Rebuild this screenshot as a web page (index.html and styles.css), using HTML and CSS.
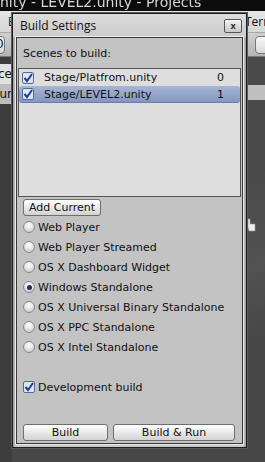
FILE: index.html
```html
<!DOCTYPE html>
<html lang="en">
<head>
    <meta charset="UTF-8">
    <title>Build Settings</title>
    <link rel="stylesheet" href="styles.css">
</head>
<body>
    <div class="app">
        <div class="app-titulo">nity - LEVEL2.unity - Projects</div>
        <div class="menubar">
            <span>E</span>
            <span>Terrain</span>
        </div>
        <div class="toolbar">
            <span class="tool-btn esquerda">0</span>
            <span class="tool-btn direita"></span>
        </div>
        <div class="area">
            <div class="painel-esq">
                <div class="linha clara">ce</div>
                <div class="linha">ur</div>
            </div>
            <div class="cena">
                <div class="faixa"></div>
                <svg class="mao" width="9" height="14" viewBox="0 0 9 14">
                    <path d="M1 1 L3 1 L3 6 L8 6 L8 13 L2 13 L1 9 Z" fill="#eee" stroke="#999" stroke-width="0.6"/>
                </svg>
            </div>
        </div>
    </div>

    <div class="janela">
        <div class="titulo">
            <span>Build Settings</span>
            <span class="fechar">x</span>
        </div>
        <div class="painel">
            <div class="rotulo">Scenes to build:</div>
            <div class="lista">
                <div class="cena-item">
                    <span class="check">
                        <svg width="12" height="12" viewBox="0 0 12 12"><rect x="0.5" y="0.5" width="11" height="11" rx="1.5" fill="#dfe5f0" stroke="#566c98"/><path d="M2.5 6 L5 9 L10 2" fill="none" stroke="#1d3f8e" stroke-width="2"/></svg>
                    </span>
                    <span class="nome">Stage/Platfrom.unity</span>
                    <span class="indice">0</span>
                </div>
                <div class="cena-item ativo">
                    <span class="check">
                        <svg width="12" height="12" viewBox="0 0 12 12"><rect x="0.5" y="0.5" width="11" height="11" rx="1.5" fill="#dfe5f0" stroke="#566c98"/><path d="M2.5 6 L5 9 L10 2" fill="none" stroke="#1d3f8e" stroke-width="2"/></svg>
                    </span>
                    <span class="nome">Stage/LEVEL2.unity</span>
                    <span class="indice">1</span>
                </div>
            </div>
            <button class="botao adicionar">Add Current</button>
            <div class="plataformas">
                <div class="opcao"><span class="radio"></span>Web Player</div>
                <div class="opcao"><span class="radio"></span>Web Player Streamed</div>
                <div class="opcao"><span class="radio"></span>OS X Dashboard Widget</div>
                <div class="opcao"><span class="radio marcado"></span>Windows Standalone</div>
                <div class="opcao"><span class="radio"></span>OS X Universal Binary Standalone</div>
                <div class="opcao"><span class="radio"></span>OS X PPC Standalone</div>
                <div class="opcao"><span class="radio"></span>OS X Intel Standalone</div>
            </div>
            <div class="opcao dev">
                <span class="check">
                    <svg width="12" height="12" viewBox="0 0 12 12"><rect x="0.5" y="0.5" width="11" height="11" rx="1.5" fill="#dfe5f0" stroke="#566c98"/><path d="M2.5 6 L5 9 L10 2" fill="none" stroke="#1d3f8e" stroke-width="2"/></svg>
                </span>
                Development build
            </div>
            <div class="acoes">
                <button class="botao build">Build</button>
                <button class="botao run">Build &amp; Run</button>
            </div>
        </div>
    </div>
</body>
</html>
```

FILE: styles.css
```css
* {
    box-sizing: border-box;
    margin: 0;
    padding: 0;
}

body {
    width: 265px;
    height: 462px;
    overflow: hidden;
    position: relative;
    background-color: #454545;
    font-family: 'DejaVu Sans', sans-serif;
    color: #111;
}

/* janela principal atras */
.app {
    display: flex;
    flex-direction: column;
    height: 100%;
}

.app-titulo {
    height: 11px;
    background-color: #0c0c0c;
    color: #d8d8d8;
    font-size: 14px;
    line-height: 4px;
    overflow: hidden;
    white-space: nowrap;
    filter: blur(0.4px);
}

.menubar {
    height: 22px;
    background: linear-gradient(#e6e6e6, #d6d6d6);
    border-bottom: 1px solid #a8a8a8;
    display: flex;
    justify-content: space-between;
    align-items: center;
    font-size: 12px;
    padding: 0 0 0 8px;
    font-family: 'Open Sans', sans-serif;
}

.menubar span:first-child {
    width: 4px;
    overflow: hidden;
}

.menubar span:last-child {
    width: 20px;
    overflow: hidden;
    white-space: nowrap;
}

.toolbar {
    height: 24px;
    background: linear-gradient(#cfcfcf, #b4b4b4);
    display: flex;
    justify-content: space-between;
    align-items: center;
    border-bottom: 1px solid #777;
}

.tool-btn {
    height: 18px;
    background: linear-gradient(#fafafa, #d8d8d8);
    border: 1px solid #777;
    border-radius: 4px;
    font-size: 12px;
}

.tool-btn.esquerda {
    width: 10px;
    margin-left: -5px;
    text-align: right;
    padding-right: 1px;
}

.tool-btn.direita {
    width: 20px;
    margin-right: -10px;
}

.area {
    flex: 1;
    display: flex;
}

.painel-esq {
    width: 12px;
    overflow: hidden;
    background-color: #3d3d3d;
}

.painel-esq .linha {
    height: 20px;
    font-size: 12px;
    line-height: 20px;
    background-color: #bdbdbd;
    white-space: nowrap;
    direction: rtl;
}

.painel-esq .linha.clara {
    margin-top: 7px;
    background-color: #e2e2e2;
}

.cena {
    flex: 1;
    background: linear-gradient(160deg, #4a4a4a 40%, #525252 60%, #474747 75%);
    position: relative;
}

.faixa {
    height: 15px;
    margin-top: 28px;
    background-color: #c0c0c0;
}

.mao {
    position: absolute;
    right: 9px;
    top: 161px;
}

/* janela Build Settings */
.janela {
    position: absolute;
    left: 12px;
    top: 13px;
    width: 235px;
    height: 435px;
    border: 1px solid #1e1e1e;
    background: linear-gradient(90deg, #9c9c9c, #c9c9c9 3px, #c9c9c9 calc(100% - 3px), #9c9c9c);
    padding: 0 3px 3px 3px;
    display: flex;
    flex-direction: column;
    box-shadow: 0 0 0 1px #5a5a5a;
}

.titulo {
    height: 23px;
    display: flex;
    justify-content: space-between;
    align-items: center;
    background: linear-gradient(#dcdcdc, #cbcbcb);
    margin: 0 -3px;
    padding-left: 7px;
    padding-right: 4px;
    font-family: 'Open Sans', sans-serif;
    font-size: 12px;
}

.fechar {
    width: 18px;
    height: 14px;
    border: 1px solid #555;
    border-radius: 2px;
    background: linear-gradient(#f4f4f4, #c8c8c8);
    font-size: 9px;
    font-weight: bold;
    line-height: 11px;
    text-align: center;
    color: #333;
    margin-top: 1px;
}

.painel {
    flex: 1;
    background-color: #c3c3c3;
    border: 1px solid #3a3a3a;
    box-shadow: 0 0 0 1px #eaeaea;
    display: flex;
    flex-direction: column;
    padding: 0 1px 1px 1px;
    font-size: 11px;
}

.rotulo {
    padding: 9px 0 0 5px;
    height: 30px;
}

.lista {
    height: 129px;
    background-color: #dedede;
    border: 1px solid #555;
}

.cena-item {
    height: 17px;
    display: flex;
    align-items: center;
    padding: 0 16px 0 3px;
}

.cena-item.ativo {
    background: linear-gradient(#a7b6d5, #8596bd);
    border-radius: 3px;
    border-bottom: 1px solid #6c7ea8;
}

.check {
    width: 12px;
    height: 12px;
    display: inline-block;
}

.check svg {
    display: block;
}

.cena-item .nome {
    margin-left: 10px;
    flex: 1;
}

.botao {
    font-family: 'DejaVu Sans', sans-serif;
    font-size: 11px;
    color: #111;
    height: 17px;
    border: 1px solid #6e6e6e;
    border-radius: 3px;
    background: linear-gradient(#ffffff, #e4e4e4 60%, #d2d2d2);
}

.adicionar {
    width: 78px;
    margin: 2px 0 0 5px;
}

.plataformas {
    margin-top: 1px;
}

.opcao {
    height: 20px;
    display: flex;
    align-items: center;
    padding-left: 5px;
    gap: 3px;
}

.radio {
    width: 12px;
    height: 12px;
    border-radius: 50%;
    border: 1px solid #8a8a8a;
    background: radial-gradient(circle at 50% 30%, #ffffff, #d6d6d6 70%, #bdbdbd);
    display: inline-flex;
    align-items: center;
    justify-content: center;
}

.radio.marcado::after {
    content: "";
    width: 5px;
    height: 5px;
    border-radius: 50%;
    background-color: #1c2f5a;
}

.opcao.dev {
    margin-top: 20px;
}

.acoes {
    margin-top: auto;
    display: flex;
    gap: 5px;
    padding: 0 5px 1px 5px;
}

.build {
    width: 85px;
}

.run {
    width: 122px;
}
```
